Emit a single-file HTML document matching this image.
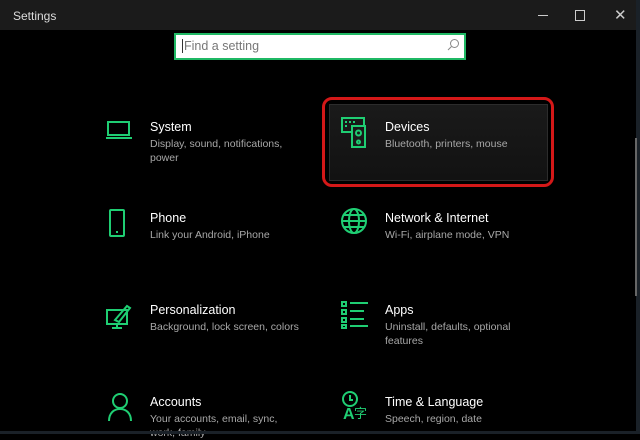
<!DOCTYPE html><html><head><style>
body{margin:0;width:640px;height:434px;background:#000;font-family:"Liberation Sans",sans-serif;overflow:hidden;position:relative}
.tb{position:absolute;left:0;top:0;width:640px;height:30px;background:#1b1b1b;color:#ddd;font-size:12px}
.abs{position:absolute}
.t{position:absolute;color:#fff;font-size:12.5px}
.s{position:absolute;color:#a8a8a8;font-size:10.5px;line-height:14px}
svg{position:absolute}
</style></head><body>
<div class="tb"><span class="abs" style="left:13px;top:9px">Settings</span>
<div class="abs" style="left:538px;top:15px;width:10px;height:1px;background:#ccc"></div>
<div class="abs" style="left:575px;top:10px;width:8px;height:9px;border:1px solid #ccc"></div>
<span class="abs" style="left:614px;top:6px;font-size:15px;color:#ccc">✕</span></div>
<div class="abs" style="left:636px;top:0;width:4px;height:434px;background:#1a2128"></div>
<div class="abs" style="left:635px;top:138px;width:2px;height:158px;background:#666"></div>
<div class="abs" style="left:174px;top:33px;width:288px;height:23px;border:2px solid #1fb864;background:#fff"></div>
<div class="abs" style="left:182px;top:39px;width:1px;height:14px;background:#333"></div>
<span class="abs" style="left:184px;top:39px;font-size:12.5px;color:#777">Find a setting</span>
<svg style="left:446px;top:38px" width="14" height="14"><circle cx="8.5" cy="5.5" r="4" fill="none" stroke="#888"/><path d="M5.5 8.5L2 12" stroke="#888"/></svg>
<div class="abs" style="left:322px;top:97px;width:226px;height:84px;border:3px solid #d41818;border-radius:10px"></div>
<div class="abs" style="left:329px;top:104px;width:217px;height:75px;background:linear-gradient(#1a1a1a,#121212);border:1px solid #2c2c2c"></div>
<!-- icons -->
<svg style="left:105px;top:120px" width="30" height="22" fill="none" stroke="#1fce73" stroke-width="2"><rect x="3" y="2" width="21" height="13"/><path d="M1 18h26"/></svg>
<svg style="left:340px;top:116px" width="30" height="34" fill="none" stroke="#1fce73" stroke-width="2"><rect x="2" y="2" width="22" height="14"/><rect x="12" y="10" width="13" height="21" fill="#1a1a1a"/><circle cx="18.5" cy="17" r="2.5"/><circle cx="18.5" cy="26" r="1.5"/><path d="M5 6h2M9 6h2M13 6h2M5 10h2" /></svg>
<svg style="left:108px;top:208px" width="20" height="32" fill="none" stroke="#1fce73" stroke-width="2"><rect x="2" y="2" width="14" height="26" rx="1"/><path d="M8 24h2"/></svg>
<svg style="left:340px;top:207px" width="30" height="30" fill="none" stroke="#1fce73" stroke-width="2"><circle cx="14" cy="14" r="12"/><ellipse cx="14" cy="14" rx="5" ry="12"/><path d="M2 14h24M4 8h20M4 20h20"/></svg>
<svg style="left:105px;top:302px" width="30" height="28" fill="none" stroke="#1fce73" stroke-width="2"><rect x="2" y="8" width="20" height="14"/><path d="M12 22v3M7 26h10M10 18l12-14 3 2-11 14z"/></svg>
<svg style="left:340px;top:300px" width="30" height="30" fill="none" stroke="#1fce73" stroke-width="2"><rect x="2" y="2" width="4" height="4"/><rect x="2" y="10" width="4" height="4"/><rect x="2" y="18" width="4" height="4"/><rect x="2" y="25" width="4" height="3"/><path d="M10 3h18M10 11h14M10 19h14M10 26h18"/></svg>
<svg style="left:108px;top:392px" width="28" height="30" fill="none" stroke="#1fce73" stroke-width="2"><circle cx="12" cy="9" r="7"/><path d="M1 29c0-8 5-12 11-12s11 4 11 12"/></svg>
<svg style="left:340px;top:390px" width="32" height="36" fill="none" stroke="#1fce73" stroke-width="2"><circle cx="10" cy="9" r="7"/><path d="M10 5v5h3"/></svg>
<span class="abs" style="left:343px;top:406px;color:#1fce73;font-size:16px;font-weight:bold">A</span>
<span class="abs" style="left:354px;top:403px;color:#1fce73;font-size:13px;font-family:'Noto Sans CJK SC',sans-serif">字</span>
<span class="t" style="left:150px;top:120px">System</span><div class="s" style="left:150px;top:137px">Display, sound, notifications,<br>power</div>
<span class="t" style="left:385px;top:120px">Devices</span><div class="s" style="left:385px;top:137px">Bluetooth, printers, mouse</div>
<span class="t" style="left:150px;top:211px">Phone</span><div class="s" style="left:150px;top:228px">Link your Android, iPhone</div>
<span class="t" style="left:385px;top:211px">Network &amp; Internet</span><div class="s" style="left:385px;top:228px">Wi-Fi, airplane mode, VPN</div>
<span class="t" style="left:150px;top:303px">Personalization</span><div class="s" style="left:150px;top:320px">Background, lock screen, colors</div>
<span class="t" style="left:385px;top:303px">Apps</span><div class="s" style="left:385px;top:320px">Uninstall, defaults, optional<br>features</div>
<span class="t" style="left:150px;top:395px">Accounts</span><div class="s" style="left:150px;top:412px">Your accounts, email, sync,<br>work, family</div>
<span class="t" style="left:385px;top:395px">Time &amp; Language</span><div class="s" style="left:385px;top:412px">Speech, region, date</div>
<div class="abs" style="left:0;top:431px;width:640px;height:3px;background:#1a2128"></div>
</body></html>
